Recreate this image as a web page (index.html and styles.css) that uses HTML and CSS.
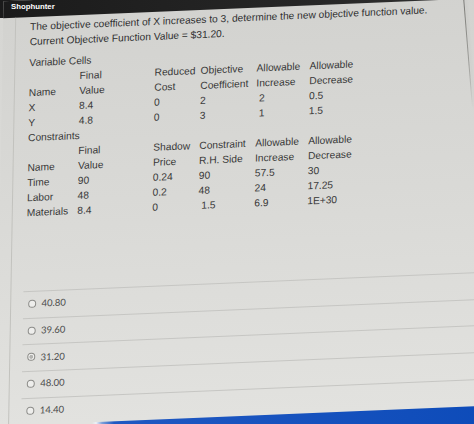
FILE: index.html
```html
<!DOCTYPE html>
<html lang="en">
<head>
<meta charset="utf-8">
<title>Sensitivity report question</title>
<link rel="stylesheet" href="styles.css">
</head>
<body>
<div class="scene">
  <div class="topbar"></div>
  <div class="edge"></div>
  <div class="card">
    <div class="question">
      <p>The objective coefficient of X increases to 3, determine the new objective function value.</p>
      <p>Current Objective Function Value = $31.20.</p>
    </div>
    <div class="report">
      <div class="title">Variable Cells</div>
      <span></span><span>Final</span><span>Reduced</span><span>Objective</span><span>Allowable</span><span>Allowable</span>
      <span>Name</span><span>Value</span><span>Cost</span><span>Coefficient</span><span>Increase</span><span>Decrease</span>
      <span>X</span><span>8.4</span><span>0</span><span>2</span><span class="ind">2</span><span>0.5</span>
      <span>Y</span><span>4.8</span><span>0</span><span>3</span><span class="ind">1</span><span>1.5</span>
      <div class="title">Constraints</div>
      <span></span><span>Final</span><span>Shadow</span><span>Constraint</span><span>Allowable</span><span>Allowable</span>
      <span>Name</span><span>Value</span><span>Price</span><span>R.H. Side</span><span>Increase</span><span>Decrease</span>
      <span>Time</span><span>90</span><span>0.24</span><span>90</span><span>57.5</span><span>30</span>
      <span>Labor</span><span>48</span><span>0.2</span><span>48</span><span>24</span><span>17.25</span>
      <span>Materials</span><span>8.4</span><span>0</span><span class="ind">1.5</span><span>6.9</span><span>1E+30</span>
    </div>
    <ul class="options">
      <li><span class="radio"></span><span>40.80</span></li>
      <li><span class="radio"></span><span>39.60</span></li>
      <li><span class="radio marked"></span><span>31.20</span></li>
      <li><span class="radio"></span><span>48.00</span></li>
      <li><span class="radio"></span><span>14.40</span></li>
    </ul>
  </div>
  <div class="taskbar"></div>
</div>
<div class="watermark">Shophunter</div>
</body>
</html>
```
FILE: styles.css
```css
html, body {
  margin: 0;
  padding: 0;
}
html {
  overflow: hidden;
}
body {
  width: 474px;
  height: 424px;
  overflow: hidden;
  position: relative;
  background: linear-gradient(#1b1b1b 0, #1b1b1b 18px, #d6d6d3 18px, #e0e0dd 100%);
  font-family: "Liberation Sans", Arial, sans-serif;
  color: #3a3a3a;
}
.watermark {
  position: absolute;
  left: 11px;
  top: 2px;
  z-index: 5;
  color: #ffffff;
  font: bold 7.8px/9px "Liberation Sans", Arial, sans-serif;
}
.scene {
  position: relative;
  width: 490px;
  height: 450px;
  background: linear-gradient(#d2d2cf 0, #d9d9d6 45%, #e3e3e0 100%);
  transform: skew(-1deg, -2.4deg);
  transform-origin: 30px 200px;
}
.topbar {
  height: 17px;
  background: linear-gradient(90deg, #1b1b1b 0, #262626 60%, #333333 100%);
}
.edge {
  position: absolute;
  left: 459.5px;
  top: 17px;
  width: 1px;
  height: 110px;
  background: linear-gradient(#7a7a76, rgba(122, 122, 118, 0.6) 60%, rgba(122, 122, 118, 0));
  box-shadow: 2px 0 3px rgba(0, 0, 0, 0.06);
  transform: rotate(-5.6deg);
  transform-origin: top;
}
.card {
  margin-left: 12px;
  border-left: 1px solid #c2c2be;
  padding: 2.2px 0 0 14px;
}
.question p {
  margin: 0;
  font-size: 10.2px;
  line-height: 15.3px;
  color: #303030;
}
.report {
  margin-top: 5.4px;
  display: grid;
  grid-template-columns: 50.5px 75px 46px 56px 53px auto;
  grid-auto-rows: 15px;
  font-size: 10.2px;
  line-height: 15px;
  color: #383838;
  white-space: nowrap;
}
.report .title {
  grid-column: 1 / -1;
}
.report .ind {
  padding-left: 3px;
}
.options {
  list-style: none;
  margin: 70.8px 0 0 -2.4px;
  padding: 0;
  font-family: Lato, "Liberation Sans", sans-serif;
  font-size: 9.5px;
  color: #4d4d4d;
}
.options li {
  box-sizing: border-box;
  height: 26.7px;
  border-top: 1px solid #c6c6c3;
  padding-bottom: 2px;
  display: flex;
  align-items: center;
  gap: 5.8px;
}
.radio {
  box-sizing: border-box;
  width: 8px;
  height: 8px;
  margin-left: 5px;
  border: 1px solid #8c8c89;
  border-radius: 50%;
  background: #eeeeec;
}
.radio.marked {
  background: radial-gradient(circle, #b4b4b1 0 1.6px, #eeeeec 2.2px);
}
.taskbar {
  height: 40px;
  margin: 1px -10px 0 0;
  background: linear-gradient(90deg, rgba(240, 242, 246, 0) 0, rgba(240, 242, 246, 0) 96px, #eef2f8 100px, #7fa1d9 106px, #1f58c2 118px, #0d4bb9 100%);
}
```
